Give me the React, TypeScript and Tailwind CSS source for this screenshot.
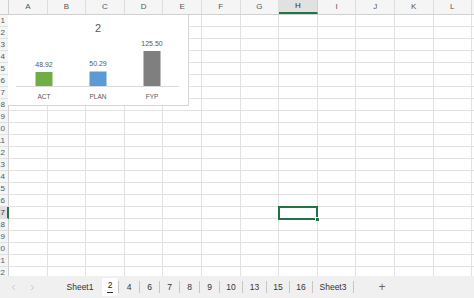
import React from "react";
import { ChevronLeft, ChevronRight } from "lucide-react";

const cols = ["A", "B", "C", "D", "E", "F", "G", "H", "I", "J", "K", "L", "M"];
const rows = Array.from({ length: 22 }, (_, i) => i + 1);

function Chart() {
  const txt = { fontFamily: "'Liberation Sans', Arial, sans-serif" };
  return (
    <div className="absolute left-[8px] top-[15px] w-[181px] h-[91px] bg-white border-r border-b border-[#d6d6d6]">
      <svg width="180" height="90" className="block">
        <g transform="translate(-8,-15)" style={txt}>
          <text x="98" y="32" fontSize="11" fill="#595959" textAnchor="middle">2</text>
          <line x1="16" y1="86.5" x2="179" y2="86.5" stroke="#d9d9d9" strokeWidth="1" />
          <rect x="35.5" y="72" width="17" height="14" fill="#70ad47" />
          <rect x="89.5" y="71.5" width="17" height="14.5" fill="#5b9bd5" />
          <rect x="143.5" y="51" width="17" height="35" fill="#7f7f7f" />
          <text x="44" y="66.5" fontSize="7" fill="#595959" textAnchor="middle">48.92</text>
          <text x="98" y="66" fontSize="7" fill="#595959" textAnchor="middle">50.29</text>
          <text x="152" y="45.5" fontSize="7" fill="#595959" textAnchor="middle">125.50</text>
          <text x="44" y="98.5" fontSize="6.5" fill="#595959" textAnchor="middle">ACT</text>
          <text x="98" y="98.5" fontSize="6.5" fill="#595959" textAnchor="middle">PLAN</text>
          <text x="152" y="98.5" fontSize="6.5" fill="#595959" textAnchor="middle">FYP</text>
        </g>
      </svg>
    </div>
  );
}

function Sep() {
  return <div className="w-px h-[12px] bg-[#c6c6c6]" />;
}

export default function App() {
  return (
    <div
      className="w-[474px] h-[298px] overflow-hidden bg-white flex flex-col"
      style={{ fontFamily: "'Liberation Sans', Arial, sans-serif" }}
    >
      <div className="relative h-[276px] overflow-hidden">
        {/* column header */}
        <div className="flex h-[15px] bg-[#f5f5f5] border-b border-[#d0d0d0]">
          <div className="w-[9px] shrink-0 border-r border-[#d0d0d0]" />
          {cols.map((c) => (
            <div
              key={c}
              className={
                c === "H"
                  ? "w-[38.6px] shrink-0 flex items-center justify-center text-[8px] text-[#333] bg-[#e1e1e1] border-b-2 border-[#217346] border-r border-r-[#d0d0d0]"
                  : "w-[38.6px] shrink-0 flex items-center justify-center text-[8px] text-[#555] border-r border-[#dedede]"
              }
            >
              {c}
            </div>
          ))}
        </div>
        {/* rows */}
        {rows.map((r) => (
          <div key={r} className="flex h-[12px]">
            <div
              className={
                r === 17
                  ? "w-[9px] shrink-0 bg-[#e1e1e1] border-r-2 border-[#217346] border-b border-b-[#e0e0e0] overflow-hidden flex justify-end items-center pr-[2px] text-[8px] leading-none text-[#333] whitespace-nowrap"
                  : "w-[9px] shrink-0 bg-[#f5f5f5] border-r border-[#d0d0d0] border-b border-b-[#e0e0e0] overflow-hidden flex justify-end items-center pr-[3px] text-[8px] leading-none text-[#555] whitespace-nowrap"
              }
            >
              {r}
            </div>
            {cols.map((c) => (
              <div key={c} className="w-[38.6px] shrink-0 border-r border-b border-[#e2e2e2]" />
            ))}
          </div>
        ))}
        <Chart />
        {/* selected cell */}
        <div className="absolute left-[278px] top-[206px] w-[40px] h-[14px] border-2 border-[#217346]" />
        <div className="absolute left-[315px] top-[217px] w-[5px] h-[5px] bg-[#217346] border border-white" />
      </div>
      {/* sheet tabs */}
      <div className="h-[22px] bg-[#f0f0f0] flex items-center text-[8.5px] text-[#333]">
        <div className="w-[58px] shrink-0 flex items-center">
          <ChevronLeft className="ml-[9px] text-[#a8a8a8]" size={9} strokeWidth={1.5} />
          <ChevronRight className="ml-[10px] text-[#a8a8a8]" size={9} strokeWidth={1.5} />
        </div>
        <div className="w-[44px] shrink-0 flex justify-center">Sheet1</div>
        <div className="w-[16px] h-[18px] shrink-0 bg-white flex flex-col items-center justify-center rounded-[2px]">
          <span className="leading-none text-[#1a1a1a]">2</span>
          <div className="w-[6px] h-px bg-[#333] mt-[2px]" />
        </div>
        <Sep />
        <div className="w-[20px] shrink-0 flex justify-center">4</div>
        <Sep />
        <div className="w-[19px] shrink-0 flex justify-center">6</div>
        <Sep />
        <div className="w-[19px] shrink-0 flex justify-center">7</div>
        <Sep />
        <div className="w-[19px] shrink-0 flex justify-center">8</div>
        <Sep />
        <div className="w-[19px] shrink-0 flex justify-center">9</div>
        <Sep />
        <div className="w-[22px] shrink-0 flex justify-center">10</div>
        <Sep />
        <div className="w-[23px] shrink-0 flex justify-center">13</div>
        <Sep />
        <div className="w-[22px] shrink-0 flex justify-center">15</div>
        <Sep />
        <div className="w-[22px] shrink-0 flex justify-center">16</div>
        <Sep />
        <div className="w-[40px] shrink-0 flex justify-center">Sheet3</div>
        <Sep />
        <div className="w-[56px] shrink-0 flex justify-center text-[12px] text-[#666] font-light leading-none">+</div>
      </div>
    </div>
  );
}
